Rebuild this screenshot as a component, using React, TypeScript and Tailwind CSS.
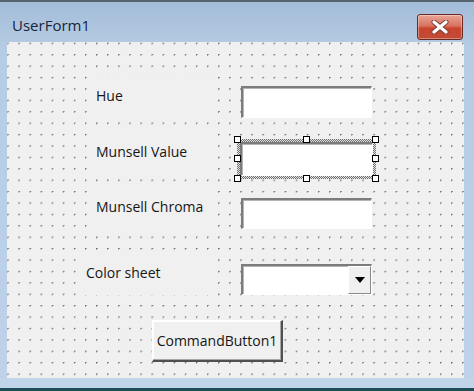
import React from "react";

const font = { fontFamily: '"Open Sans", "Noto Sans", sans-serif' };

function TextBox({ className = "" }: { className?: string }) {
  return (
    <div
      className={`bg-white border-t-2 border-l-2 border-t-[#7c7c7c] border-l-[#7c7c7c] border-b border-r border-b-white border-r-white shadow-[inset_1px_1px_0_#b4b4b4] ${className}`}
    />
  );
}

function Handle({ className }: { className: string }) {
  return <div className={`absolute w-[7px] h-[7px] bg-white border border-black ${className}`} />;
}

export default function App() {
  return (
    <div
      className="w-[474px] h-[391px] flex flex-col bg-[linear-gradient(180deg,#a2bbd7_0%,#b6cce4_12%,#bed3ea_100%)] overflow-hidden"
      style={font}
    >
      <div className="h-[2px] bg-[#56646f]" />
      <div className="h-[40px] flex items-center justify-between pl-[12px] pr-[11px]">
        <span className="text-[15px] leading-[20px] text-[#17243a] mt-[6px]">UserForm1</span>
        <div className="w-[46px] h-[26px] mt-[10px] rounded-[3px] border border-[#6b2b25] bg-[linear-gradient(180deg,#e8a596_0%,#d9735f_45%,#c9452f_55%,#c24b36_100%)] shadow-[inset_0_0_0_1px_rgba(255,255,255,0.35)] flex items-center justify-center">
          <svg width="18" height="14" viewBox="0 0 18 14">
            <path d="M3 2 L15 12 M15 2 L3 12" stroke="#7a3b33" strokeWidth="5" strokeLinecap="round" />
            <path d="M3 2 L15 12 M15 2 L3 12" stroke="#ffffff" strokeWidth="3.2" strokeLinecap="round" />
          </svg>
        </div>
      </div>

      <div className="ml-[7px] mr-[10px] h-[336px] bg-[#f0f0f0] bg-[radial-gradient(circle_at_0.6px_0.6px,#6f6f6f_0.7px,transparent_1.1px)] [background-size:11.1px_11.42px] [background-position:0.3px_0.7px] flex flex-col text-[14px] leading-[20px] text-[#161616]">
        {/* Hue */}
        <div className="flex mt-[35px] h-[42px]">
          <div className="ml-[81px] w-[130px] h-[42px] bg-[#f0f0f0] pl-[8px] pt-[9px]">Hue</div>
          <TextBox className="ml-[23px] mt-[9px] w-[131px] h-[32px]" />
        </div>

        {/* Munsell Value */}
        <div className="flex mt-[14px] h-[49px]">
          <div className="ml-[81px] w-[130px] h-[42px] bg-[#f0f0f0] pl-[8px] pt-[9px]">Munsell Value</div>
          <div className="relative ml-[16px] mt-[3px] w-[145px] h-[46px] p-[3px]">
            <div className="w-full h-full p-[3px] bg-[repeating-conic-gradient(#6e6e6e_0_25%,#e4e4e4_0_50%)] [background-size:2px_2px]">
              <TextBox className="w-full h-full" />
            </div>
            <Handle className="left-0 top-0" />
            <Handle className="left-[69px] top-0" />
            <Handle className="right-0 top-0" />
            <Handle className="left-0 top-[19px]" />
            <Handle className="right-0 top-[19px]" />
            <Handle className="left-0 bottom-0" />
            <Handle className="left-[69px] bottom-0" />
            <Handle className="right-0 bottom-0" />
          </div>
        </div>

        {/* Munsell Chroma */}
        <div className="flex mt-[6px] h-[42px]">
          <div className="ml-[81px] w-[130px] h-[42px] bg-[#f0f0f0] pl-[8px] pt-[9px]">Munsell Chroma</div>
          <TextBox className="ml-[23px] mt-[10px] w-[131px] h-[31px]" />
        </div>

        {/* Color sheet */}
        <div className="flex mt-[23px] h-[42px]">
          <div className="ml-[71px] w-[140px] h-[42px] bg-[#f0f0f0] pl-[8px] pt-[10px]">Color sheet</div>
          <div className="ml-[23px] mt-[11px] w-[131px] h-[31px] bg-white border-t-2 border-l-2 border-t-[#7c7c7c] border-l-[#7c7c7c] border-b border-r border-b-white border-r-white shadow-[inset_1px_1px_0_#b4b4b4] flex justify-end">
            <div className="w-[23px] h-full my-auto bg-[#f0f0f0] border-t border-l border-t-white border-l-white border-b border-r border-b-[#8a8a8a] border-r-[#8a8a8a] flex items-center justify-center">
              <svg width="10" height="6" viewBox="0 0 10 6">
                <path d="M0 0 H10 L5 6 Z" fill="#000" />
              </svg>
            </div>
          </div>
        </div>

        {/* Button */}
        <div className="flex mt-[25px]">
          <div className="ml-[145px] w-[131px] h-[42px] bg-[#f0f0f0] border-t border-l border-t-white border-l-white border-b-2 border-r-2 border-b-[#505050] border-r-[#505050] shadow-[inset_-1px_-1px_0_#a8a8a8,inset_1px_1px_0_#ffffff] flex items-center justify-center">
            CommandButton1
          </div>
        </div>
      </div>

      <div className="h-[10px] bg-[#c0d4ea]" />
      <div className="h-[3px] bg-[#1f4d58]" />
    </div>
  );
}
